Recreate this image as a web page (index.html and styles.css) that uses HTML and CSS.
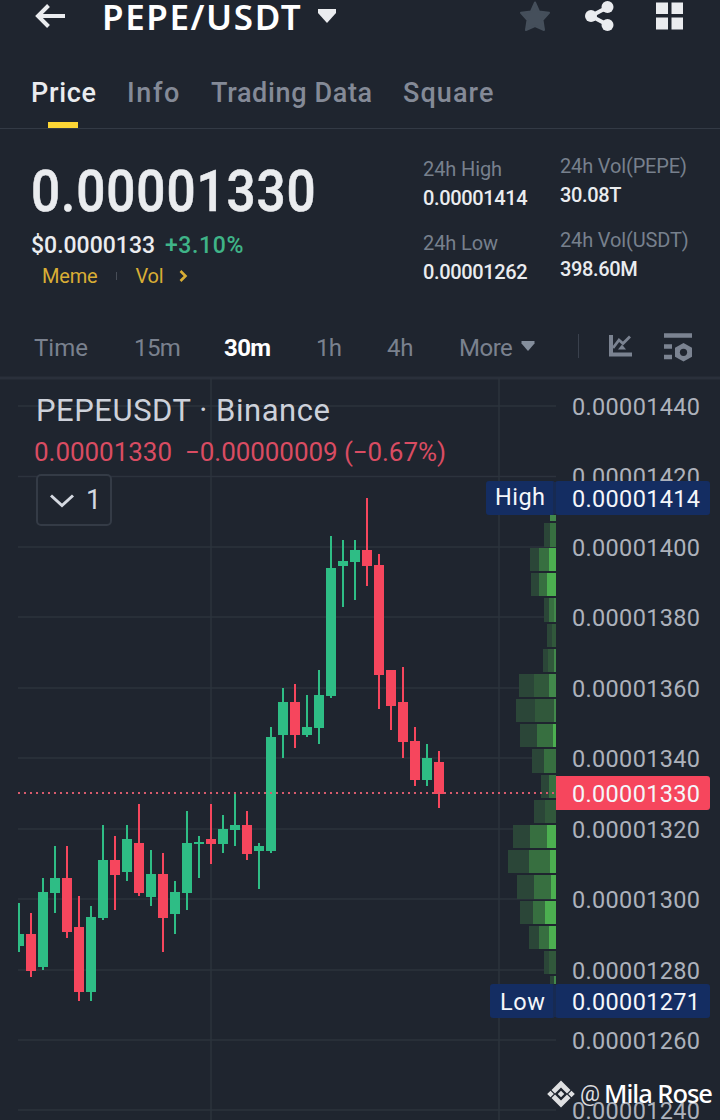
FILE: index.html
```html
<!DOCTYPE html>
<html lang="en">
<head>
<meta charset="utf-8">
<title>PEPE/USDT</title>
<link rel="stylesheet" href="styles.css">
</head>
<body>
<header class="topbar">
  <svg class="back" width="32" height="26" viewBox="0 0 32 26"><path d="M31 13H4M14.500 2.500L4 13L14.500 23.500" fill="none" stroke="#eaecef" stroke-width="4"/></svg>
  <h1 class="pair">PEPE/USDT</h1>
  <svg class="caret" width="18" height="14" viewBox="0 0 18 14"><path d="M0 0H18V4L9 14L0 4Z" fill="#eaecef"/></svg>
  <svg class="star" width="32" height="32" viewBox="0 0 32 32"><path d="M16 2.500L20 11.500L30 12.800L23.500 20L25 30L16 26L7 30L8.500 20L2 12.800L12 11.500Z" fill="#454f5b" stroke="#454f5b" stroke-width="2" stroke-linejoin="round"/></svg>
  <svg class="share" width="30" height="32" viewBox="0 0 30 32"><path d="M24 7L7 16L24 25" fill="none" stroke="#eaecef" stroke-width="4"/><g fill="#eaecef"><circle cx="23.500" cy="7" r="6"/><circle cx="7" cy="16" r="6"/><circle cx="23.500" cy="25" r="6"/></g></svg>
  <svg class="grid" width="28" height="28" viewBox="0 0 28 28"><path d="M0 .5H12V12H0ZM15.500 .5H27V12H15.500ZM0 15.500H12V27.500H0ZM15.500 15.500H27V27.500H15.500Z" fill="#eaecef"/></svg>
</header>
<nav class="tabs">
  <span class="tab tab-price">Price</span>
  <span class="tab tab-info">Info</span>
  <span class="tab tab-data">Trading Data</span>
  <span class="tab tab-square">Square</span>
</nav>
<section class="summary">
  <div class="quote">
    <div class="last"><span class="last-text">0.00001330</span></div>
    <div class="fiat"><span class="usd">$0.0000133</span><span class="gain">+3.10%</span></div>
    <div class="tags"><span class="tag">Meme</span><i class="tag-sep"></i><span class="tag">Vol</span>
      <svg class="chev" width="9" height="12" viewBox="0 0 9 12"><path d="M1.500 1L6.500 6L1.500 11" fill="none" stroke="#d9ae35" stroke-width="2.600"/></svg></div>
  </div>
  <dl class="stats stats-price">
    <dt>24h High</dt><dd>0.00001414</dd>
    <dt>24h Low</dt><dd>0.00001262</dd>
  </dl>
  <dl class="stats stats-vol">
    <dt>24h Vol(PEPE)</dt><dd>30.08T</dd>
    <dt>24h Vol(USDT)</dt><dd>398.60M</dd>
  </dl>
</section>
<nav class="intervals">
  <span class="iv iv-time">Time</span>
  <span class="iv iv-15">15m</span>
  <span class="iv iv-30">30m</span>
  <span class="iv iv-1h">1h</span>
  <span class="iv iv-4h">4h</span>
  <span class="iv iv-more">More</span>
  <svg class="more-caret" width="14" height="10" viewBox="0 0 14 10"><path d="M.5 0H13.500V2.500L7 10L.5 2.500Z" fill="#848e9c"/></svg>
  <i class="iv-sep"></i>
  <svg class="ind" width="24" height="24" viewBox="0 0 24 24"><path d="M2 1V20.500H23" fill="none" stroke="#7b8391" stroke-width="4"/><path d="M4 14L10 6L14 9.500L21 2.500" fill="none" stroke="#7b8391" stroke-width="2.800"/><path d="M13 10.500L17 15.500H9Z" fill="#7b8391"/></svg>
  <svg class="settings" width="28" height="29" viewBox="0 0 28 29"><path d="M0 2.500H28M0 13.500H8M0 24H8" stroke="#7b8391" stroke-width="4.500"/><path d="M19.500 10L28 14.800V23.700L19.500 28.500L11 23.700V14.800Z" fill="#7b8391"/><circle cx="19.500" cy="19.300" r="3.600" fill="#1f252f"/></svg>
</nav>
<main class="chart">
<svg class="plot" width="720" height="744" viewBox="0 376 720 744">
  <path class="top-rule" d="M0 378H720"/>
  <path class="gridline" d="M18 406H556M18 476.500H556M18 547H556M18 617H556M18 688H556M18 758H556M18 829H556M18 899H556M18 970H556M18 1040H556M18 1110H556M211 378V1120M499 378V1120"/>
  <g class="vol-low">
    <path d="M544 523h12v24h-12zM530 548h26v23h-26zM531 573h25v23h-25zM544 598h12v24h-12zM547 624h9v23h-9zM543 649h13v23h-13zM519 674h37v23h-37zM516 699h40v23h-40zM520 724h36v23h-36zM532 749h24v24h-24zM541 775h15v23h-15zM534 800h22v23h-22zM513 825h43v23h-43zM508 850h48v23h-48zM517 875h39v24h-39zM520 901h36v23h-36zM529 926h27v23h-27zM544 951h12v23h-12zM550 976h6v8h-6z"/>
  </g>
  <path class="vol-soft" d="M552 624h4v23h-4zM548 649h8v23h-8zM534 674h22v23h-22zM535 699h21v23h-21zM545 800h11v23h-11zM549 951h7v23h-7z"/>
  <path class="vol-mid" d="M550 523h6v24h-6zM539 548h17v23h-17zM539 573h17v23h-17zM549 598h7v24h-7zM537 724h19v23h-19zM544 749h12v24h-12zM549 775h7v23h-7zM530 825h26v23h-26zM529 850h27v23h-27zM534 875h22v24h-22zM533 901h23v23h-23zM539 926h17v23h-17z"/>
  <path class="vol-bright" d="M549 548h7v23h-7zM547 573h9v23h-9zM553 724h3v23h-3zM547 825h9v23h-9zM550 850h6v23h-6zM551 875h5v24h-5zM545 901h11v23h-11zM549 926h7v23h-7z"/>
  <path class="vol-tip" d="M550 515h6v6h-6zM554 598h2v24h-2zM554 649h2v23h-2zM549 674h7v23h-7zM554 699h2v23h-2zM554 976h2v8h-2z"/>
  <path class="wick up" d="M19 903V952M43 878V970M55 846V913M91 906V1001M103 825V920M127 825V881M151 850V906M175 881V934M187 811V910M199 836V878M223 815V853M235 794V846M259 843V889M271 727V853M283 688V758M307 695V737M319 670V744M331 536V698M343 540V607M355 540V600M427 744V786"/>
  <path class="wick down" d="M31 913V977M67 846V938M79 896V1001M115 836V910M139 804V896M163 853V952M211 804V864M247 811V860M295 684V748M367 498V586M379 554V709M391 670V730M403 667V758M415 727V786M439 751V808"/>
  <path class="up-fill" d="M18 934h6v12h-6z"/>
  <path class="candle up" d="M43 892V967M55 878V893M91 917V992M103 860V918M127 839V872M151 874V897M175 892V914M187 843V893M199 842V844M223 829V844M235 825V830M259 846V851M271 737V851M283 702V735M307 727V735M319 695V728M331 568V696M343 561V566M355 550V562M427 758V780"/>
  <path class="candle down" d="M31 934V971M67 878V932M79 927V992M115 860V875M139 843V893M163 874V918M211 839V844M247 825V854M295 702V735M367 550V566M379 565V675M391 670V706M403 702V742M415 741V780M439 762V794"/>
  <path class="last-line" d="M18 793H556"/>
  <g class="axis">
    <text x="572" y="415" textLength="128">0.00001440</text>
    <text x="572" y="485" textLength="128">0.00001420</text>
    <text x="572" y="556" textLength="128">0.00001400</text>
    <text x="572" y="626" textLength="128">0.00001380</text>
    <text x="572" y="697" textLength="128">0.00001360</text>
    <text x="572" y="767" textLength="128">0.00001340</text>
    <text x="572" y="838" textLength="128">0.00001320</text>
    <text x="572" y="908" textLength="128">0.00001300</text>
    <text x="572" y="979" textLength="128">0.00001280</text>
    <text x="572" y="1049" textLength="128">0.00001260</text>
    <text x="572" y="1119" textLength="128">0.00001240</text>
  </g>
  <g class="badge">
    <rect x="486" y="481" width="69" height="34" rx="3"/><rect x="555" y="481" width="155" height="34" rx="3"/><path class="badge-seam" d="M553 482h3v32h-3z"/>
    <rect x="490" y="984" width="65" height="34" rx="3"/><rect x="555" y="984" width="155" height="34" rx="3"/><path class="badge-seam" d="M553 985h3v32h-3z"/>
  </g>
  <path class="last-badge" d="M556 776H707Q710 776 710 779V807Q710 810 707 810H556Z"/>
  <g class="axis axis-on">
    <text x="495" y="505" textLength="50">High</text><text x="572" y="507" textLength="128">0.00001414</text>
    <text x="572" y="802" textLength="128">0.00001330</text>
    <text x="500" y="1010" textLength="45">Low</text><text x="572" y="1010" textLength="128">0.00001271</text>
  </g>
  <text class="symbol" x="36" y="421" textLength="294">PEPEUSDT · Binance</text>
  <text class="delta" x="34" y="461" textLength="138">0.00001330</text>
  <text class="delta" x="185" y="461" textLength="261">−0.00000009 (−0.67%)</text>
  <rect class="count-box" x="37" y="475" width="74" height="50" rx="4"/>
  <path class="count-chev" d="M51 495.500L62 505.500L73 495.500"/>
  <text class="count" x="86" y="509">1</text>
  <g class="mark">
    <path d="M561 1080.500L570.500 1090L567 1093.500L561 1087.500L555 1093.500L551.500 1090ZM561 1107.500L570.500 1098L567 1094.500L561 1100.500L555 1094.500L551.500 1098ZM550.500 1090.700L553.800 1094L550.500 1097.300L547.200 1094ZM571.500 1090.700L574.800 1094L571.500 1097.300L568.200 1094ZM561 1090.700L564.300 1094L561 1097.300L557.700 1094Z"/>
    <text class="at" x="580" y="1101" textLength="20" lengthAdjust="spacingAndGlyphs">@</text>
    <text class="author" x="604" y="1103" textLength="109">Mila Rose</text>
  </g>
</svg>
</main>
</body>
</html>
```
FILE: styles.css
```css
* { box-sizing: border-box; }
body { margin: 0; width: 720px; height: 1120px; overflow: hidden; background: #1f252f; font-family: Roboto, "Liberation Sans", sans-serif; color: #eaecef; }
svg { display: block; flex: none; }
span { white-space: nowrap; }

.topbar { display: flex; height: 64px; align-items: flex-start; padding-left: 34px; }
.back { margin-top: 3px; }
.pair { flex: none; margin: 0 0 0 36px; width: 201px; font: 600 35px/34px "Noto Sans", Roboto, sans-serif; letter-spacing: 1.600px; color: #fff; white-space: nowrap; }
.caret { margin: 9px 0 0 15px; }
.star { margin-left: 183px; }
.share { margin-left: 33px; }
.grid { margin: 2px 0 0 42px; }

.tabs { display: flex; height: 65px; border-bottom: 1px solid #333a45; padding-left: 31px; font: 500 27px/58px Roboto, sans-serif; color: #848a97; }
.tab-price { position: relative; width: 96px; color: #eaecef; letter-spacing: .7px; }
.tab-price::after { content: ""; position: absolute; left: 17px; top: 58px; width: 30px; height: 6px; background: #fcd535; }
.tab-info { width: 84px; letter-spacing: 1.6px; }
.tab-data { width: 192px; letter-spacing: .65px; }
.tab-square { letter-spacing: 1.1px; }

.summary { display: flex; height: 185px; padding-left: 31px; }
.quote { width: 392px; padding-top: 28px; }
.last { height: 70px; font: 500 57px/70px Roboto, sans-serif; -webkit-text-stroke: .6px #eaecef; }
.last-text { display: inline-block; transform: scaleX(.9); transform-origin: left; letter-spacing: 1px; }
.fiat { display: flex; gap: 10px; height: 36px; font: 500 23px/38px Roboto, sans-serif; }
.usd { width: 124px; }
.gain { color: #3fb488; letter-spacing: .6px; }
.tags { display: flex; height: 26px; align-items: center; padding-left: 11px; font: 400 20px/26px Roboto, sans-serif; color: #d9ae35; letter-spacing: -.2px; }
.tag-sep { width: 1px; height: 8px; margin: 0 18px 0 19px; background: #474d57; }
.chev { margin-left: 16px; }
.stats { margin: 0; width: 137px; }
.stats-price { padding-top: 25px; }
.stats-vol { padding-top: 22px; }
.stats dt { height: 30px; font: 400 20px/30px Roboto, sans-serif; color: #77808d; white-space: nowrap; }
.stats-price dt { letter-spacing: -.1px; }
.stats-vol dt { letter-spacing: -.15px; }
.stats dd { height: 44px; margin: 0; font: 500 20px/28px Roboto, sans-serif; letter-spacing: -.35px; }

.intervals { display: flex; height: 62px; align-items: flex-start; padding-left: 34px; font: 400 24px/68px Roboto, sans-serif; color: #7a818e; }
.iv-time { width: 100px; }
.iv-15 { width: 90px; letter-spacing: -.6px; }
.iv-30 { width: 92px; font-weight: 700; color: #fff; letter-spacing: -.6px; }
.iv-1h { width: 71px; letter-spacing: -.8px; }
.iv-4h { width: 72px; letter-spacing: -.3px; }
.iv-more { width: 62px; letter-spacing: -.5px; }
.more-caret { margin-top: 27px; }
.iv-sep { width: 1px; height: 24px; margin: 20px 0 0 43px; background: #3a414d; }
.ind { margin: 20px 0 0 30px; }
.settings { margin: 19px 0 0 31px; }

.chart { height: 744px; }
.top-rule { stroke: #2a303b; stroke-width: 3; }
.gridline { fill: none; stroke: #2c333d; stroke-width: 1.5; }
.vol-low { fill: #2b4638; }
.vol-soft { fill: #31583b; }
.vol-mid { fill: #376f40; }
.vol-bright { fill: #4caf50; }
.vol-tip { fill: #42884b; }
.wick { fill: none; stroke-width: 2; }
.candle { fill: none; stroke-width: 10; }
.up { stroke: #2ebd85; }
.up-fill { fill: #2ebd85; }
.down { stroke: #f6465d; }
.last-line { fill: none; stroke: #d75b6d; stroke-width: 2; stroke-dasharray: 2 4; }
.axis { font-size: 23.500px; fill: #adb2bc; }
.axis-on { fill: #f4f6fa; }
.badge { fill: #142d62; }
.badge-seam { fill: #172a52; }
.last-badge { fill: #f6465d; }
.symbol { font-size: 31px; fill: #cdd1da; }
.delta { font-size: 26px; fill: #d94c62; }
.count-box { fill: #1f252f; stroke: #343b46; stroke-width: 2; }
.count-chev { fill: none; stroke: #d5d9e1; stroke-width: 3; }
.count { font-size: 27px; fill: #d5d9e1; }
.mark { fill: #dedfe1; }
.at { font-size: 22px; }
.author { font: 500 25.500px "Noto Sans", sans-serif; fill: #fff; }
```
